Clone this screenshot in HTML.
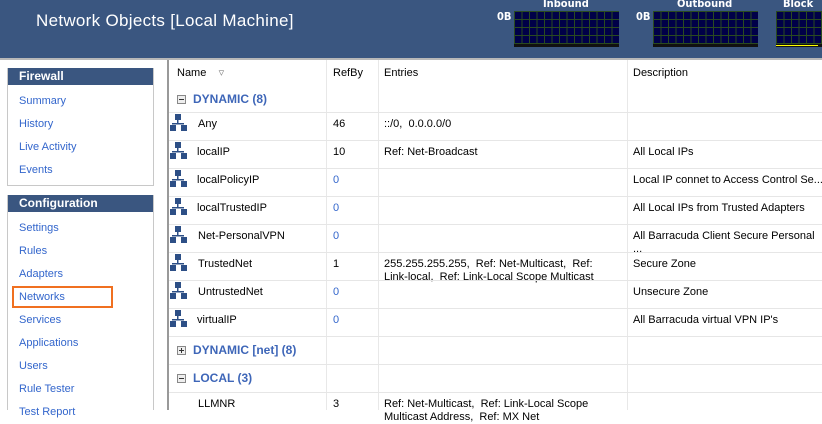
<!DOCTYPE html>
<html><head><style>
*{margin:0;padding:0;box-sizing:border-box}
body{width:822px;height:410px;overflow:hidden;background:#fff;font-family:"Liberation Sans",Tahoma,sans-serif;font-size:11px;position:relative;color:#000}
.hdr{position:absolute;left:0;top:0;width:822px;height:58px;background:#3a5680}
.hdr h1{position:absolute;left:36px;top:11px;color:#fff;font-weight:normal;font-size:17px;letter-spacing:0.3px}
.sep{position:absolute;left:0;top:58px;width:822px;height:2px;background:#b8b8b8}
.lbl{position:absolute;color:#fff;font-weight:bold;font-size:11px;font-family:"DejaVu Sans Condensed","Liberation Sans Narrow",sans-serif}
.g{position:absolute;top:11px;height:36px;background:#000048;
background-image:linear-gradient(#2a4a20 1px,transparent 1px),linear-gradient(90deg,#2a4a20 1px,transparent 1px);
background-size:7.5px 8px;border-bottom:3px solid #111}
.box{position:absolute;left:7px;width:147px;border:1px solid #c8c8c8;border-top:none}
.box .t{background:#3a5680;color:#fff;font-weight:bold;font-size:12px;height:17px;line-height:17px;padding-left:11px}
.box a{display:block;color:#3366cc;height:23px;line-height:23px;padding-left:11px;font-size:11px}
.tbl{position:absolute;left:167px;top:60px;width:655px;height:350px;border-left:2px solid #999}
.vl{position:absolute;top:0;bottom:0;width:1px;background:#e8e8e8}
.row{position:absolute;left:0;width:655px;height:28px;border-top:1px solid #e6e6e6}
.c{position:absolute;top:5px;line-height:13px}
.grp{color:#3e66b8;font-weight:bold;font-size:12px}
.ic{position:absolute;left:1px;top:1px;width:17px;height:17px}
.pm{position:absolute;left:8px;top:9px;width:9px;height:9px;border:1px solid #888;background:#eee}
.pm:before{content:"";position:absolute;left:1px;top:3px;width:5px;height:1px;background:#333}
.pm.p:after{content:"";position:absolute;left:3px;top:1px;width:1px;height:5px;background:#333}
</style></head><body>
<div class="hdr"><h1>Network Objects [Local Machine]</h1>
<div class="lbl" style="left:543px;top:-3px">Inbound</div>
<div class="lbl" style="left:677px;top:-3px">Outbound</div>
<div class="lbl" style="left:783px;top:-3px">Block</div>
<div class="lbl" style="left:497px;top:10px">0B</div>
<div class="lbl" style="left:636px;top:10px">0B</div>
<div class="g" style="left:514px;width:105px"></div>
<div class="g" style="left:653px;width:105px"></div>
<div class="g" style="left:776px;width:46px;border-bottom:3px solid #111"></div>
<div style="position:absolute;left:776px;top:45px;width:42px;height:1px;background:#ff0"></div>
</div>
<div class="sep"></div>

<div class="box" style="top:68px;height:118px"><div class="t">Firewall</div>
<a style="margin-top:5px">Summary</a><a>History</a><a>Live Activity</a><a>Events</a></div>
<div class="box" style="top:195px;height:215px;border-bottom:none"><div class="t">Configuration</div>
<a style="margin-top:5px">Settings</a><a>Rules</a><a>Adapters</a><a>Networks</a><a>Services</a><a>Applications</a><a>Users</a><a>Rule Tester</a><a>Test Report</a></div>
<div style="position:absolute;left:12px;top:286px;width:101px;height:22px;border:2px solid #f07020"></div>

<div class="tbl">
<div class="vl" style="left:157px"></div><div class="vl" style="left:209px"></div><div class="vl" style="left:458px"></div>
<div class="row" style="top:0;border:none"><span class="c" style="left:8px;top:7px">Name&nbsp;&nbsp;&nbsp;&nbsp;<span style="color:#888">▿</span></span><span class="c" style="left:164px;top:7px">RefBy</span><span class="c" style="left:215px;top:7px">Entries</span><span class="c" style="left:464px;top:7px">Description</span></div>
<div class="row" style="top:26px;border:none"><div class="pm"></div><span class="c grp" style="left:24px;top:7px">DYNAMIC (8)</span></div>

<div class="row" style="top:52px"><svg class="ic" viewBox="0 0 17 17"><g fill="#2d4f86"><rect x="5" y="0" width="6" height="6"/><rect x="7" y="6" width="1.5" height="4"/><rect x="2" y="9" width="12" height="1.5"/><rect x="0" y="11" width="6" height="6"/><rect x="11" y="11" width="6" height="6"/></g></svg><span class="c" style="left:29px">Any</span><span class="c" style="left:164px">46</span><span class="c" style="left:215px">::/0,&nbsp; 0.0.0.0/0</span></div>
<div class="row" style="top:80px"><svg class="ic" viewBox="0 0 17 17"><g fill="#2d4f86"><rect x="5" y="0" width="6" height="6"/><rect x="7" y="6" width="1.5" height="4"/><rect x="2" y="9" width="12" height="1.5"/><rect x="0" y="11" width="6" height="6"/><rect x="11" y="11" width="6" height="6"/></g></svg><span class="c" style="left:28px">localIP</span><span class="c" style="left:164px">10</span><span class="c" style="left:215px">Ref: Net-Broadcast</span><span class="c" style="left:464px">All Local IPs</span></div>
<div class="row" style="top:108px"><svg class="ic" viewBox="0 0 17 17"><g fill="#2d4f86"><rect x="5" y="0" width="6" height="6"/><rect x="7" y="6" width="1.5" height="4"/><rect x="2" y="9" width="12" height="1.5"/><rect x="0" y="11" width="6" height="6"/><rect x="11" y="11" width="6" height="6"/></g></svg><span class="c" style="left:28px">localPolicyIP</span><span class="c" style="left:164px;color:#3366cc">0</span><span class="c" style="left:464px">Local IP connet to Access Control Se...</span></div>
<div class="row" style="top:136px"><svg class="ic" viewBox="0 0 17 17"><g fill="#2d4f86"><rect x="5" y="0" width="6" height="6"/><rect x="7" y="6" width="1.5" height="4"/><rect x="2" y="9" width="12" height="1.5"/><rect x="0" y="11" width="6" height="6"/><rect x="11" y="11" width="6" height="6"/></g></svg><span class="c" style="left:28px">localTrustedIP</span><span class="c" style="left:164px;color:#3366cc">0</span><span class="c" style="left:464px">All Local IPs from Trusted Adapters</span></div>
<div class="row" style="top:164px"><svg class="ic" viewBox="0 0 17 17"><g fill="#2d4f86"><rect x="5" y="0" width="6" height="6"/><rect x="7" y="6" width="1.5" height="4"/><rect x="2" y="9" width="12" height="1.5"/><rect x="0" y="11" width="6" height="6"/><rect x="11" y="11" width="6" height="6"/></g></svg><span class="c" style="left:29px">Net-PersonalVPN</span><span class="c" style="left:164px;color:#3366cc">0</span><span class="c" style="left:464px">All Barracuda Client Secure Personal ...</span></div>
<div class="row" style="top:192px"><svg class="ic" viewBox="0 0 17 17"><g fill="#2d4f86"><rect x="5" y="0" width="6" height="6"/><rect x="7" y="6" width="1.5" height="4"/><rect x="2" y="9" width="12" height="1.5"/><rect x="0" y="11" width="6" height="6"/><rect x="11" y="11" width="6" height="6"/></g></svg><span class="c" style="left:29px">TrustedNet</span><span class="c" style="left:164px">1</span><span class="c" style="left:215px">255.255.255.255,&nbsp; Ref: Net-Multicast,&nbsp; Ref:<br>Link-local,&nbsp; Ref: Link-Local Scope Multicast</span><span class="c" style="left:464px">Secure Zone</span></div>
<div class="row" style="top:220px"><svg class="ic" viewBox="0 0 17 17"><g fill="#2d4f86"><rect x="5" y="0" width="6" height="6"/><rect x="7" y="6" width="1.5" height="4"/><rect x="2" y="9" width="12" height="1.5"/><rect x="0" y="11" width="6" height="6"/><rect x="11" y="11" width="6" height="6"/></g></svg><span class="c" style="left:29px">UntrustedNet</span><span class="c" style="left:164px;color:#3366cc">0</span><span class="c" style="left:464px">Unsecure Zone</span></div>
<div class="row" style="top:248px"><svg class="ic" viewBox="0 0 17 17"><g fill="#2d4f86"><rect x="5" y="0" width="6" height="6"/><rect x="7" y="6" width="1.5" height="4"/><rect x="2" y="9" width="12" height="1.5"/><rect x="0" y="11" width="6" height="6"/><rect x="11" y="11" width="6" height="6"/></g></svg><span class="c" style="left:28px">virtualIP</span><span class="c" style="left:164px;color:#3366cc">0</span><span class="c" style="left:464px">All Barracuda virtual VPN IP's</span></div>
<div class="row" style="top:276px"><div class="pm p"></div><span class="c grp" style="left:24px;top:7px">DYNAMIC [net] (8)</span></div>
<div class="row" style="top:304px"><div class="pm"></div><span class="c grp" style="left:24px;top:7px">LOCAL (3)</span></div>
<div class="row" style="top:332px"><span class="c" style="left:29px">LLMNR</span><span class="c" style="left:164px">3</span><span class="c" style="left:215px">Ref: Net-Multicast,&nbsp; Ref: Link-Local Scope<br>Multicast Address,&nbsp; Ref: MX Net</span></div>
</div>
</body></html>
